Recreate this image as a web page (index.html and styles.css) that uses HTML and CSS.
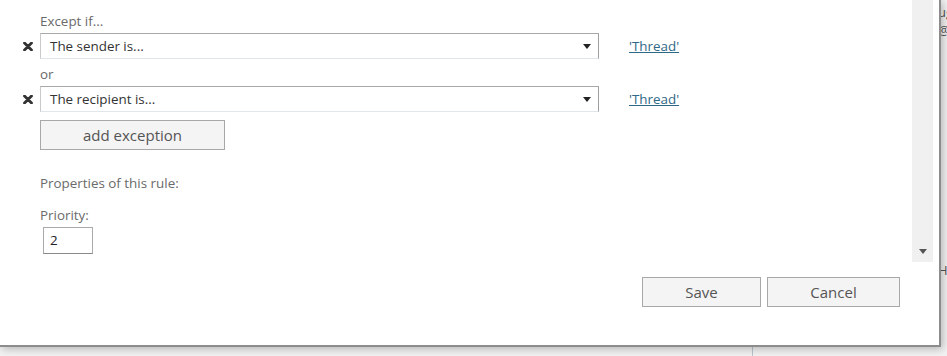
FILE: index.html
```html
<!DOCTYPE html>
<html lang="en">
<head>
	<meta charset="UTF-8">
	<title>Inbox rule</title>
	<link rel="stylesheet" href="styles.css">
</head>
<body>
	<div class="page">
		<div class="sidePanel">
			<div class="sideLine first">ugust</div>
			<div class="sideLine">@contoso.com</div>
			<div class="sideLine last">Help</div>
		</div>
	</div>

	<div class="dialog">
		<div class="scrollArea">
			<div class="content">
				<div class="label exceptLabel">Except if...</div>
				<div class="ruleRow">
					<span class="remove">
						<svg width="10" height="9" viewBox="0 0 10 9"><path d="M1.5 1 L8.5 8 M8.5 1 L1.5 8" stroke="#333" stroke-width="2.8" stroke-linecap="round"/></svg>
					</span>
					<div class="select">
						<span>The sender is...</span>
						<span class="caret"></span>
					</div>
					<a class="value" href="#">'Thread'</a>
				</div>
				<div class="label orLabel">or</div>
				<div class="ruleRow">
					<span class="remove">
						<svg width="10" height="9" viewBox="0 0 10 9"><path d="M1.5 1 L8.5 8 M8.5 1 L1.5 8" stroke="#333" stroke-width="2.8" stroke-linecap="round"/></svg>
					</span>
					<div class="select">
						<span>The recipient is...</span>
						<span class="caret"></span>
					</div>
					<a class="value" href="#">'Thread'</a>
				</div>
				<button class="btn addBtn">add exception</button>
				<div class="label propsLabel">Properties of this rule:</div>
				<div class="label priorityLabel">Priority:</div>
				<div class="priority">2</div>
			</div>
			<div class="scrollbar">
				<span class="caret"></span>
			</div>
		</div>
		<div class="footer">
			<button class="btn saveBtn">Save</button>
			<button class="btn cancelBtn">Cancel</button>
		</div>
	</div>
</body>
</html>
```

FILE: styles.css
```css
html, body {
	margin: 0;
	padding: 0;
	height: 100%;
	overflow: hidden;
	font-family: "Open Sans", "Noto Sans", sans-serif;
	font-size: 13.4px;
	background: #f2f2f2;
}
.page {
	height: 100%;
	padding-left: 752px;
}
.sidePanel {
	height: 100%;
	border-left: 1px solid #bcc6cd;
	padding-left: 185px;
	color: #555;
	font-size: 13px;
}
.sideLine {
	line-height: 18px;
	white-space: nowrap;
}
.sideLine.first {
	padding-top: 3px;
}
.sideLine.last {
	margin-top: 222px;
}

/* ----- dialog ----- */
.dialog {
	position: absolute;
	top: 0;
	left: 0;
	width: 939px;
	height: 345px;
	background: white;
	border-right: 2px solid #8c8c8c;
	border-bottom: 2px solid #8c8c8c;
	box-shadow: 2px 2px 8px rgba(0,0,0,0.25);
}
.scrollArea {
	display: flex;
	height: 262px;
	padding-right: 6px;
}
.content {
	flex: 1;
	padding-left: 40px;
	padding-top: 12px;
}
.scrollbar {
	width: 21px;
	background: #f0f0f0;
	display: flex;
	align-items: flex-end;
	justify-content: center;
	padding-bottom: 8px;
	box-sizing: border-box;
}

.label {
	color: #6a6a6a;
	line-height: 18px;
}
.exceptLabel {
	margin-bottom: 3px;
}
.orLabel {
	margin-top: 6px;
	margin-bottom: 3px;
}
.propsLabel {
	margin-top: 24px;
}
.priorityLabel {
	margin-top: 14px;
}

.ruleRow {
	display: flex;
	align-items: center;
	margin-left: -40px;
}
.remove {
	width: 40px;
	display: flex;
	justify-content: center;
	padding-left: 16px;
	box-sizing: border-box;
}
.select {
	width: 559px;
	height: 26px;
	box-sizing: border-box;
	border: 1px solid #c9c9c9;
	border-top-color: #a9a9a9;
	border-right-color: #9f9f9f;
	border-bottom-color: #e1e6eb;
	display: flex;
	align-items: center;
	justify-content: space-between;
	padding: 0 7px 0 9px;
	color: #333;
}
.caret {
	width: 0;
	height: 0;
	border-left: 4px solid transparent;
	border-right: 4px solid transparent;
	border-top: 5px solid #222;
}
.scrollbar .caret {
	border-top-color: #555;
}
.value {
	margin-left: 30px;
	color: #2f6886;
	text-decoration: underline;
}

.btn {
	font-family: inherit;
	font-size: 15px;
	color: #555;
	background: #f4f4f4;
	border: 1px solid #a8a8a8;
	box-sizing: border-box;
	height: 30px;
	padding: 0;
	display: block;
}
.addBtn {
	width: 185px;
	margin-top: 8px;
}
.priority {
	margin-top: 3px;
	margin-left: 3px;
	width: 50px;
	height: 27px;
	box-sizing: border-box;
	border: 1px solid #a9a9a9;
	border-bottom-color: #8a8a8a;
	padding-left: 6px;
	line-height: 25px;
	color: #222;
}

.footer {
	display: flex;
	justify-content: flex-end;
	gap: 6px;
	padding-top: 15px;
	padding-right: 39px;
}
.saveBtn {
	width: 119px;
}
.cancelBtn {
	width: 133px;
}
```
